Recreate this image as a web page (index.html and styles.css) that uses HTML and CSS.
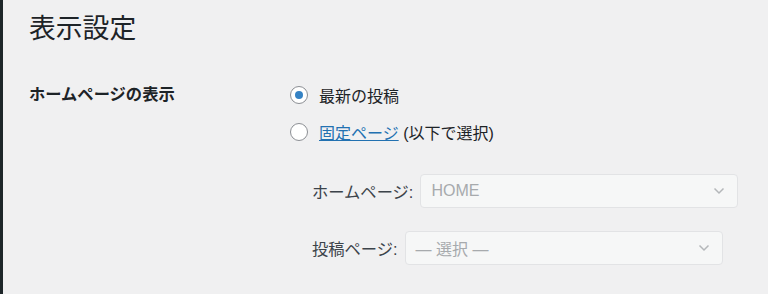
FILE: index.html
```html
<!DOCTYPE html>
<html lang="ja">
<head>
<meta charset="utf-8">
<link rel="stylesheet" href="styles.css">
</head>
<body>
<div class="sidebar-edge"></div>
<main class="wrap">
  <h1 class="page-title">表示設定</h1>
  <div class="form-row">
    <div class="row-label">ホームページの表示</div>
    <div class="row-field">
      <label class="radio-line">
        <span class="radio is-checked"></span>
        <span>最新の投稿</span>
      </label>
      <label class="radio-line">
        <span class="radio"></span>
        <span><a class="link" href="#">固定ページ</a> (以下で選択)</span>
      </label>
      <div class="sub-fields">
        <div class="select-line">
          <span class="select-label">ホームページ:</span>
          <div class="select select-wide">
            <span class="select-value">HOME</span>
            <svg class="chevron" width="12" height="8" viewBox="0 0 12 8"><path d="M1.5 1.5 L6 6 L10.5 1.5" fill="none" stroke="#b4b7ba" stroke-width="1.5"/></svg>
          </div>
        </div>
        <div class="select-line">
          <span class="select-label">投稿ページ:</span>
          <div class="select select-wide">
            <span class="select-value">— 選択 —</span>
            <svg class="chevron" width="12" height="8" viewBox="0 0 12 8"><path d="M1.5 1.5 L6 6 L10.5 1.5" fill="none" stroke="#b4b7ba" stroke-width="1.5"/></svg>
          </div>
        </div>
      </div>
    </div>
  </div>
</main>
</body>
</html>
```
FILE: styles.css
```css
html, body {
  margin: 0;
  padding: 0;
  height: 100%;
}
body {
  background: #f0f0f1;
  display: flex;
  font-family: "Liberation Sans", "Noto Sans CJK JP", sans-serif;
  color: #1d2327;
  overflow: hidden;
}
.sidebar-edge {
  width: 3px;
  flex: 0 0 3px;
  background: #1e2629;
}
.wrap {
  flex: 1;
  padding-left: 26px;
}
.page-title {
  margin: 12px 0 0;
  font-size: 26.8px;
  line-height: 34px;
  font-weight: 400;
  color: #1d2327;
}
.form-row {
  margin-top: 30px;
  display: grid;
  grid-template-columns: 261px 1fr;
}
.row-label {
  font-size: 16.3px;
  font-weight: 700;
  line-height: 37px;
  color: #1d2327;
}
.row-field {
  display: flex;
  flex-direction: column;
}
.radio-line {
  display: flex;
  align-items: center;
  gap: 11px;
  height: 37px;
  font-size: 16px;
  color: #1d2327;
}
.radio {
  width: 18px;
  height: 18px;
  box-sizing: border-box;
  border: 1px solid #8c8f94;
  border-radius: 50%;
  background: #fff;
  display: flex;
  align-items: center;
  justify-content: center;
}
.radio.is-checked::after {
  content: "";
  width: 8px;
  height: 8px;
  border-radius: 50%;
  background: #3582c4;
}
.link {
  color: #2271b1;
  text-decoration: underline;
}
.sub-fields {
  margin-top: 24px;
  padding-left: 22px;
  display: flex;
  flex-direction: column;
  gap: 23px;
}
.select-line {
  display: flex;
  align-items: center;
  gap: 7px;
  font-size: 16.3px;
  color: #3c434a;
}
.select {
  box-sizing: border-box;
  height: 34px;
  border: 1px solid #e2e3e5;
  border-radius: 4px;
  background: #f6f7f7;
  display: flex;
  align-items: center;
  justify-content: space-between;
  padding: 0 12px 0 10px;
}
.select-wide {
  width: 318px;
}
.select-value {
  color: #a7aaad;
  font-size: 16px;
}
.chevron {
  display: block;
}
```
